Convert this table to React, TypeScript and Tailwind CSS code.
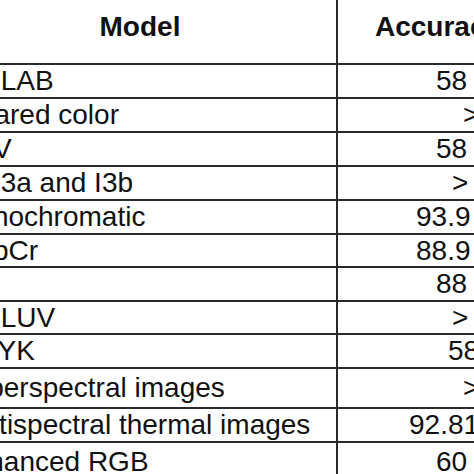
const rows = [
  { model: "CIELAB", value: "58", rowClass: "h-[34px]", valueClass: "pl-[98px]" },
  { model: "Infrared color", value: "> 90%", rowClass: "h-[34px]", valueClass: "pl-[125px]" },
  { model: "HSV", value: "58", rowClass: "h-[34px]", valueClass: "pl-[98px]" },
  { model: "I2, I3a and I3b", value: "> 95%", rowClass: "h-[34px]", valueClass: "pl-[114px]" },
  { model: "Monochromatic", value: "93.9", rowClass: "h-[34px]", valueClass: "pl-[78px]" },
  { model: "YCbCr", value: "88.9", rowClass: "h-[33px]", valueClass: "pl-[78px]" },
  { model: "HSI", value: "88", rowClass: "h-[34px]", valueClass: "pl-[98px]" },
  { model: "CIELUV", value: "> 90%", rowClass: "h-[33px]", valueClass: "pl-[114px]" },
  { model: "CMYK", value: "58", rowClass: "h-[34px]", valueClass: "pl-[110px]" },
  { model: "Hyperspectral images", value: "> 90%", rowClass: "h-[40px]", valueClass: "pl-[125px]" },
  { model: "Multispectral thermal images", value: "92.81", rowClass: "h-[34px]", valueClass: "pl-[71px]" },
  { model: "Enhanced RGB", value: "60", rowClass: "h-[40px]", valueClass: "pl-[98px]" },
];

export default function App() {
  return (
    <div className="h-[474px] w-[474px] overflow-hidden bg-white text-[#111] [font-family:'Liberation_Sans',Arial,sans-serif]">
      <div className="ml-[-56px] w-[650px]">
        <div className="grid h-[63px] grid-cols-[392px_202px]">
          <div className="pt-[11px] text-center text-[28px] font-bold leading-[32px]">
            Model
          </div>
          <div className="border-l-2 border-[#2a2a2a] pt-[11px] text-center text-[28px] font-bold leading-[32px]">
            Accuracy
          </div>
        </div>
        {rows.map((row) => (
          <div
            key={row.model}
            className={`grid grid-cols-[392px_202px] border-t-2 border-[#2a2a2a] ${row.rowClass}`}
          >
            <div className="flex items-center whitespace-nowrap pl-[10px] text-[28px] leading-[32px]">
              {row.model}
            </div>
            <div
              className={`flex items-center whitespace-nowrap border-l-2 border-[#2a2a2a] text-[28px] leading-[32px] ${row.valueClass}`}
            >
              {row.value}
            </div>
          </div>
        ))}
      </div>
    </div>
  );
}
